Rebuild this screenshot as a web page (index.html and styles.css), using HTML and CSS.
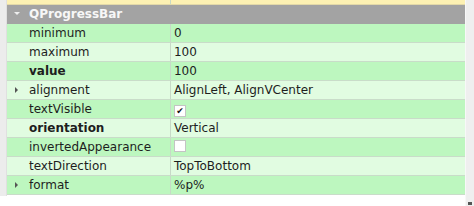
FILE: index.html
```html
<!DOCTYPE html>
<html lang="en">

<head>
    <meta charset="UTF-8">
    <title>Property Editor</title>
    <link rel="stylesheet" href="styles.css">
</head>

<body>
    <div class="editor">
        <div class="gutter"></div>
        <div class="props">
            <div class="row yellow"><span class="name"></span><span class="val"></span></div>
            <div class="row group"><span class="name"><i class="arrow down"></i>QProgressBar</span></div>
            <div class="row dark"><span class="name">minimum</span><span class="val">0</span></div>
            <div class="row light"><span class="name">maximum</span><span class="val">100</span></div>
            <div class="row dark"><span class="name bold">value</span><span class="val">100</span></div>
            <div class="row light"><span class="name"><i class="arrow"></i>alignment</span><span class="val">AlignLeft, AlignVCenter</span></div>
            <div class="row dark"><span class="name">textVisible</span><span class="val"><b class="check on">&#10004;</b></span></div>
            <div class="row light"><span class="name bold">orientation</span><span class="val">Vertical</span></div>
            <div class="row dark"><span class="name">invertedAppearance</span><span class="val"><b class="check"></b></span></div>
            <div class="row light"><span class="name">textDirection</span><span class="val">TopToBottom</span></div>
            <div class="row dark"><span class="name"><i class="arrow"></i>format</span><span class="val">%p%</span></div>
        </div>
        <div class="scroll"><span class="grip"></span></div>
    </div>
</body>

</html>
```

FILE: styles.css
```css
body {
    margin: 0;
    background: #fff;
    font-family: "DejaVu Sans", sans-serif;
    font-size: 12px;
    color: #1e1e1e;
}

.editor {
    display: flex;
    height: 206px;
}

.gutter {
    width: 6px;
    height: 196px;
    background: #ececec;
    border-right: 1px solid #e0e0e0;
}

.props {
    width: 459px;
}

.scroll {
    width: 8px;
    background: #efefef;
    border-left: 1px solid #f8f8f8;
    display: flex;
    flex-direction: column;
    justify-content: flex-end;
    align-items: center;
}

.scroll .grip {
    width: 4px;
    height: 3px;
    background: #555;
    margin-bottom: 1px;
}

.row {
    display: flex;
    height: 18px;
    line-height: 19px;
    border-bottom: 1px solid #c9dcc9;
}

.row .name {
    width: 141px;
    padding-left: 22px;
    border-right: 1px solid #c7d9c7;
    white-space: nowrap;
    position: relative;
}

.row .val {
    padding-left: 3px;
    white-space: nowrap;
}

.yellow {
    height: 4px;
    background: #fdf1b3;
    border-bottom: 1px solid #e3d9a8;
}

.group {
    background: #a3a3a3;
    color: #f7f7f7;
    font-weight: bold;
    border-bottom-color: #a3a3a3;
}

.group .name {
    border-right: none;
}

.dark {
    background: #bdf7bf;
}

.light {
    background: #e1fce1;
}

.bold {
    font-weight: bold;
}

.arrow {
    position: absolute;
    left: 8px;
    top: 6px;
    width: 0;
    height: 0;
    border-top: 3px solid transparent;
    border-bottom: 3px solid transparent;
    border-left: 3px solid #555;
}

.arrow.down {
    top: 7px;
    left: 7px;
    border-left: 3px solid transparent;
    border-right: 3px solid transparent;
    border-top: 3px solid #eee;
    border-bottom: none;
}

.check {
    display: inline-block;
    width: 12px;
    height: 12px;
    background: #fff;
    border: 1px solid #c4c4c4;
    box-sizing: border-box;
    vertical-align: -1px;
    font-size: 9px;
    line-height: 11px;
    text-align: center;
    color: #111;
}
```
